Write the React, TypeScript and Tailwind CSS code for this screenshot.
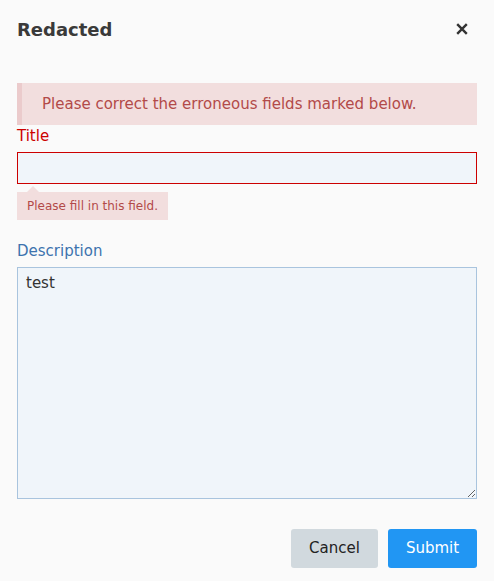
export default function App() {
  return (
    <div
      className="min-h-[581px] w-[494px] bg-[#fafafa] px-[17px] text-[#333]"
      style={{ fontFamily: '"DejaVu Sans", sans-serif' }}
    >
      <div className="flex h-[58px] items-center justify-between">
        <h1 className="text-[18px] font-bold text-[#3a3a3a]">Redacted</h1>
        <button className="mr-[3px] flex h-6 w-6 items-center justify-center text-[#333]">
          <svg width="12" height="12" viewBox="0 0 12 12">
            <path d="M1.2 1.2 L10.8 10.8 M10.8 1.2 L1.2 10.8" stroke="currentColor" strokeWidth="2.4" />
          </svg>
        </button>
      </div>

      <div className="mt-[25px] flex h-[42px] items-center border-l-[5px] border-[#ebcbcc] bg-[#f2dede] pl-[20px] text-[15px] text-[#b24a49]">
        Please correct the erroneous fields marked below.
      </div>

      <div className="mt-[1px]">
        <label className="block h-[26px] text-[15px] leading-[20px] text-[#cc0000]">Title</label>
        <input className="block h-[32px] w-full border border-[#cc0000] bg-[#f0f5fa] px-2 outline-none" />
        <div className="relative mt-[8px] inline-block bg-[#f2dede] px-[10px] text-[12px] leading-[28px] text-[#b24a49]">
          <span className="absolute -top-[6px] left-[10px] h-0 w-0 border-x-[6px] border-b-[6px] border-x-transparent border-b-[#f2dede]" />
          Please fill in this field.
        </div>
      </div>

      <div className="mt-[18px]">
        <label className="block h-[29px] text-[15px] leading-[26px] text-[#3d73ae]">Description</label>
        <textarea
          defaultValue="test"
          className="block h-[232px] w-full resize-y border border-[#a9c4de] bg-[#f0f5fa] px-[8px] py-[4px] text-[15px] leading-[22px] text-[#333] outline-none"
        />
      </div>

      <div className="mt-[30px] flex justify-end gap-[10px]">
        <button className="h-[39px] w-[87px] rounded-[3px] bg-[#d1d9de] text-[15px] text-[#222]">Cancel</button>
        <button className="h-[39px] w-[89px] rounded-[3px] bg-[#2196f3] text-[15px] text-white">Submit</button>
      </div>
    </div>
  );
}
